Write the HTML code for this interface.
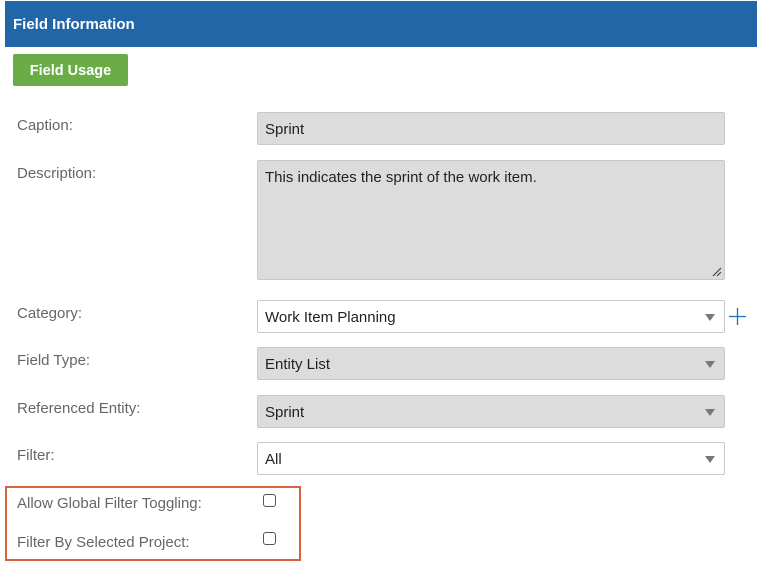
<!DOCTYPE html>
<html><head><style>
*{box-sizing:border-box;margin:0;padding:0}
body{width:757px;height:569px;background:#fff;font-family:"Liberation Sans",sans-serif;position:relative;overflow:hidden}
.hdr{position:absolute;left:5px;top:1px;width:752px;height:46px;background:#2167a8;color:#fff;font-weight:bold;font-size:15px;line-height:48px;padding-left:8px}
.btn{position:absolute;left:13px;top:54px;width:115px;height:32px;background:#6aad46;border-radius:2px;color:#fff;font-weight:bold;font-size:14.5px;line-height:34px;text-align:center}
.lbl{position:absolute;left:17px;font-size:15px;color:#666}
.in{position:absolute;left:257px;width:468px;height:33px;background:#dcdcdc;border:1px solid #c8c8c8;border-radius:2px;font-size:15px;color:#222;padding:8px 7px}
.w{background:#fff}
.arr{position:absolute;right:9px;top:13px;width:0;height:0;border-left:5px solid transparent;border-right:5px solid transparent;border-top:7px solid #777}
.box{position:absolute;left:5px;top:486px;width:296px;height:75px;border:2px solid #d8613e}
.cb{position:absolute;left:263px;width:13px;height:13px;border:1px solid #555;border-radius:3px;background:#fff}
</style></head><body>
<div class="hdr">Field Information</div>
<div class="btn">Field Usage</div>
<div class="lbl" style="top:117px">Caption:</div>
<div class="in" style="top:112px">Sprint</div>
<div class="lbl" style="top:165px">Description:</div>
<div class="in" style="top:160px;height:120px">This indicates the sprint of the work item.
<svg style="position:absolute;right:2px;bottom:2px" width="10" height="10"><path d="M1 9L9 1M5 9L9 5" stroke="#444" stroke-width="1.2"/></svg></div>
<div class="lbl" style="top:305px">Category:</div>
<div class="in w" style="top:300px">Work Item Planning<div class="arr"></div></div>
<svg style="position:absolute;left:729px;top:308px" width="17" height="17"><path d="M8.5 0V17M0 8.5H17" stroke="#1a73c0" stroke-width="1.3"/></svg>
<div class="lbl" style="top:352px">Field Type:</div>
<div class="in" style="top:347px">Entity List<div class="arr"></div></div>
<div class="lbl" style="top:400px">Referenced Entity:</div>
<div class="in" style="top:395px">Sprint<div class="arr"></div></div>
<div class="lbl" style="top:447px">Filter:</div>
<div class="in w" style="top:442px">All<div class="arr"></div></div>
<div class="box"></div>
<div class="lbl" style="top:495px">Allow Global Filter Toggling:</div>
<div class="cb" style="top:494px"></div>
<div class="lbl" style="top:534px">Filter By Selected Project:</div>
<div class="cb" style="top:532px"></div>
</body></html>
